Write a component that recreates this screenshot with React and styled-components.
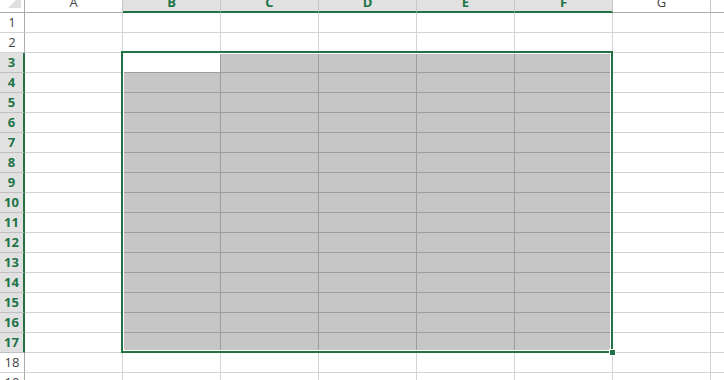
import React from 'react';
import styled, { createGlobalStyle } from 'styled-components';

const GlobalStyle = createGlobalStyle`
  html, body {
    margin: 0;
    padding: 0;
    background: #fff;
    overflow: hidden;
  }
  body {
    font-family: "Open Sans", "Noto Sans", sans-serif;
  }
`;

const GREEN = '#217346';
const COLS = ['A', 'B', 'C', 'D', 'E', 'F', 'G', 'H'];
const ROW_COUNT = 19;
// selection B3:F17, active cell B3
const SEL = { c1: 1, c2: 5, r1: 3, r2: 17 };

const Viewport = styled.div`
  width: 724px;
  height: 380px;
  overflow: hidden;
`;

const Sheet = styled.div`
  position: relative;
  display: grid;
  grid-template-columns: 25px repeat(${COLS.length}, 98px);
  grid-template-rows: 21px repeat(${ROW_COUNT}, 20px);
  margin-top: -8px;
`;

const Corner = styled.div`
  box-sizing: border-box;
  border-right: 1px solid #ababab;
  border-bottom: 1px solid #ababab;
  background: #fff;
  position: relative;
  svg {
    display: block;
  }
`;

const ColHeader = styled.div`
  box-sizing: border-box;
  display: flex;
  align-items: center;
  justify-content: center;
  font-size: 13px;
  line-height: 20px;
  background: ${(p) => (p.$selected ? '#e1e1e1' : '#fff')};
  color: ${(p) => (p.$selected ? GREEN : '#444')};
  font-weight: ${(p) => (p.$selected ? 700 : 400)};
  border-right: 1px solid #c6c6c6;
  border-bottom: ${(p) => (p.$selected ? `2px solid ${GREEN}` : '1px solid #ababab')};
`;

const RowHeader = styled.div`
  box-sizing: border-box;
  display: flex;
  align-items: center;
  justify-content: center;
  font-size: 13px;
  line-height: 19px;
  background: ${(p) => (p.$selected ? '#e1e1e1' : '#fff')};
  color: ${(p) => (p.$selected ? GREEN : '#444')};
  font-weight: ${(p) => (p.$selected ? 700 : 400)};
  border-right: ${(p) => (p.$selected ? `2px solid ${GREEN}` : '1px solid #ababab')};
  border-bottom: 1px solid ${(p) => (p.$selected ? '#c0c0c0' : '#d4d4d4')};
`;

const Cell = styled.div`
  box-sizing: border-box;
  background: ${(p) => (p.$selected && !p.$active ? '#c6c6c6' : '#fff')};
  border-right: 1px solid ${(p) => (p.$selected ? '#9e9e9e' : '#d4d4d4')};
  border-bottom: 1px solid ${(p) => (p.$selected ? '#9e9e9e' : '#d4d4d4')};
`;

const SelectionBox = styled.div`
  position: absolute;
  box-sizing: border-box;
  border: 2px solid ${GREEN};
  box-shadow: inset 0 0 0 1px #fff;
  pointer-events: none;
`;

const FillHandle = styled.div`
  position: absolute;
  box-sizing: border-box;
  width: 7px;
  height: 7px;
  background: ${GREEN};
  border: 1px solid #fff;
`;

function CornerCell() {
  return (
    <Corner>
      <svg width="24" height="20" viewBox="0 0 24 20">
        <polygon points="8,16 21,16 21,3" fill="#dfdfdf" />
      </svg>
    </Corner>
  );
}

export default function App() {
  const inCols = (c) => c >= SEL.c1 && c <= SEL.c2;
  const inRows = (r) => r >= SEL.r1 && r <= SEL.r2;

  const rows = [];
  for (let r = 1; r <= ROW_COUNT; r++) {
    rows.push(
      <RowHeader key={`h${r}`} $selected={inRows(r)}>
        {r}
      </RowHeader>
    );
    COLS.forEach((_, c) => {
      const selected = inRows(r) && inCols(c);
      const active = r === SEL.r1 && c === SEL.c1;
      rows.push(<Cell key={`${r}-${c}`} $selected={selected} $active={active} />);
    });
  }

  // selection outline geometry, computed from the grid sizes
  const left = 25 + SEL.c1 * 98 - 2;
  const top = 21 + (SEL.r1 - 1) * 20 - 2;
  const width = (SEL.c2 - SEL.c1 + 1) * 98 + 2;
  const height = (SEL.r2 - SEL.r1 + 1) * 20 + 2;

  return (
    <>
      <GlobalStyle />
      <Viewport>
        <Sheet>
          <CornerCell />
          {COLS.map((col, c) => (
            <ColHeader key={col} $selected={inCols(c)}>
              {col}
            </ColHeader>
          ))}
          {rows}
          <SelectionBox style={{ left, top, width, height }} />
          <FillHandle style={{ left: left + width - 4, top: top + height - 4 }} />
        </Sheet>
      </Viewport>
    </>
  );
}
